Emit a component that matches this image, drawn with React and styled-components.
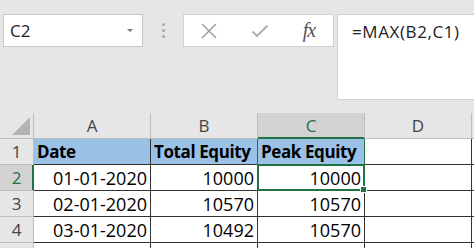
import React from 'react';
import styled, { createGlobalStyle } from 'styled-components';

const GlobalStyle = createGlobalStyle`
  html, body { margin: 0; padding: 0; background: #e6e6e6; overflow: hidden; }
  body { font-family: "Open Sans", "Noto Sans", sans-serif; }
`;

const Window = styled.div`
  width: 474px;
  height: 248px;
  background: #e6e6e6;
  overflow: hidden;
`;

const TopBar = styled.div`
  display: flex;
  align-items: flex-start;
  height: 113px;
  padding: 14px 0 0 3px;
  box-sizing: border-box;
`;

const NameBox = styled.div`
  box-sizing: border-box;
  width: 140px;
  height: 33px;
  background: #fff;
  border: 1px solid #c8c8c8;
  display: flex;
  align-items: center;
  justify-content: space-between;
  padding: 0 9px 0 6px;
  font-size: 17px;
  color: #222;
`;

const Caret = styled.span`
  width: 0;
  height: 0;
  border-left: 3px solid transparent;
  border-right: 3px solid transparent;
  border-top: 3px solid #777;
`;

const Dots = styled.div`
  width: 40px;
  height: 33px;
  display: flex;
  flex-direction: column;
  align-items: center;
  justify-content: center;
  gap: 3px;

  span {
    width: 3px;
    height: 3px;
    border-radius: 50%;
    background: #a6a6a6;
  }
`;

const ButtonsBox = styled.div`
  box-sizing: border-box;
  width: 151px;
  height: 33px;
  background: #fff;
  border: 1px solid #d2d2d2;
  display: flex;
  align-items: center;
`;

const IconSlot = styled.div`
  width: ${p => p.$w}px;
  height: 100%;
  display: flex;
  align-items: center;
  justify-content: center;
`;

const Fx = styled.span`
  font-family: "Liberation Serif", serif;
  font-style: italic;
  font-size: 20px;
  color: #555;
  letter-spacing: -1px;
`;

const FormulaBar = styled.div`
  box-sizing: border-box;
  flex: 1;
  height: 86px;
  margin-left: 3px;
  background: #fff;
  border: 1px solid #d2d2d2;
  border-right: none;
  padding: 5px 0 0 14px;
  font-size: 17px;
  letter-spacing: 0.6px;
  color: #222;
`;

const Sheet = styled.div`
  display: grid;
  grid-template-columns: 34px 117px 107px 107px 107px 1fr;
  grid-auto-rows: 26px;
  background: #fff;
`;

const HeadCell = styled.div`
  box-sizing: border-box;
  position: relative;
  display: flex;
  align-items: center;
  justify-content: center;
  background: ${p => (p.$active ? '#d2d2d2' : '#e6e6e6')};
  color: ${p => (p.$active ? '#217346' : '#444')};
  font-size: 17px;
  border-right: 1px solid ${p => (p.$rowActive ? '#217346' : '#bdbdbd')};
  border-bottom: 1px solid ${p => (p.$colActive ? '#217346' : '#bdbdbd')};
  ${p => p.$rowActive && 'box-shadow: inset -1px 0 0 #217346;'}
  ${p => p.$colActive && 'box-shadow: inset 0 -1px 0 #217346;'}
`;

const Corner = styled(HeadCell)`
  &::after {
    content: '';
    position: absolute;
    right: 3px;
    bottom: 3px;
    width: 0;
    height: 0;
    border-left: 18px solid transparent;
    border-bottom: 18px solid #b4b4b4;
  }
`;

const Cell = styled.div`
  box-sizing: border-box;
  position: relative;
  display: flex;
  align-items: flex-end;
  justify-content: ${p => (p.$right ? 'flex-end' : 'flex-start')};
  padding: 0 3px 0 3px;
  font-size: ${p => (p.$bold ? 17 : 18)}px;
  letter-spacing: ${p => (p.$bold ? '-0.4px' : '0')};
  line-height: 24px;
  font-weight: ${p => (p.$bold ? 700 : 400)};
  color: #000;
  white-space: nowrap;
  overflow: visible;
  background: ${p => (p.$blue ? '#9bc2e6' : '#fff')};
  border-right: 1px solid ${p => (p.$greenSide ? '#217346' : '#333')};
  border-bottom: 1px solid #333;
  ${p => p.$greenSide && 'border-left: 1px solid #217346; margin-left: -1px;'}

  ${p =>
    p.$selected &&
    `
    &::after {
      content: '';
      position: absolute;
      left: -1px; top: -1px; right: -1px; bottom: -1px;
      border: 2px solid #217346;
      pointer-events: none;
    }
    &::before {
      content: '';
      position: absolute;
      right: -3px; bottom: -3px;
      width: 5px; height: 5px;
      background: #217346;
      border: 1px solid #fff;
      z-index: 2;
    }
  `}
`;

const CrossIcon = () => (
  <svg width="18" height="18" viewBox="0 0 18 18">
    <path d="M2 2 L16 16 M16 2 L2 16" stroke="#a3a3a3" strokeWidth="1.6" fill="none" />
  </svg>
);

const CheckIcon = () => (
  <svg width="18" height="14" viewBox="0 0 18 14">
    <path d="M1.5 7.5 L6 12 L16.5 1.5" stroke="#b3b3b3" strokeWidth="2.2" fill="none" />
  </svg>
);

const rows = [
  { n: '1', cells: [{ t: 'Date', bold: true, blue: true }, { t: 'Total Equity', bold: true, blue: true }, { t: 'Peak Equity', bold: true, blue: true, green: true }, { t: '' }] },
  { n: '2', active: true, cells: [{ t: '01-01-2020', right: true }, { t: '10000', right: true }, { t: '10000', right: true, selected: true }, { t: '' }] },
  { n: '3', cells: [{ t: '02-01-2020', right: true }, { t: '10570', right: true }, { t: '10570', right: true }, { t: '' }] },
  { n: '4', cells: [{ t: '03-01-2020', right: true }, { t: '10492', right: true }, { t: '10570', right: true }, { t: '' }] },
  { n: '', cells: [{ t: '' }, { t: '' }, { t: '' }, { t: '' }] },
];

export default function App() {
  return (
    <Window>
      <GlobalStyle />
      <TopBar>
        <NameBox>
          <span>C2</span>
          <Caret />
        </NameBox>
        <Dots>
          <span />
          <span />
          <span />
        </Dots>
        <ButtonsBox>
          <IconSlot $w={50}><CrossIcon /></IconSlot>
          <IconSlot $w={52}><CheckIcon /></IconSlot>
          <IconSlot $w={46}><Fx>fx</Fx></IconSlot>
        </ButtonsBox>
        <FormulaBar>=MAX(B2,C1)</FormulaBar>
      </TopBar>
      <Sheet>
        <Corner />
        <HeadCell>A</HeadCell>
        <HeadCell>B</HeadCell>
        <HeadCell $active $colActive>C</HeadCell>
        <HeadCell>D</HeadCell>
        <HeadCell />
        {rows.map((r, ri) => (
          <React.Fragment key={ri}>
            <HeadCell $active={r.active} $rowActive={r.active}>{r.n}</HeadCell>
            {r.cells.map((c, i) => (
              <Cell
                key={i}
                $bold={c.bold}
                $blue={c.blue}
                $right={c.right}
                $selected={c.selected}
                $greenSide={c.green}
              >
                {c.t}
              </Cell>
            ))}
            <Cell />
          </React.Fragment>
        ))}
      </Sheet>
    </Window>
  );
}
